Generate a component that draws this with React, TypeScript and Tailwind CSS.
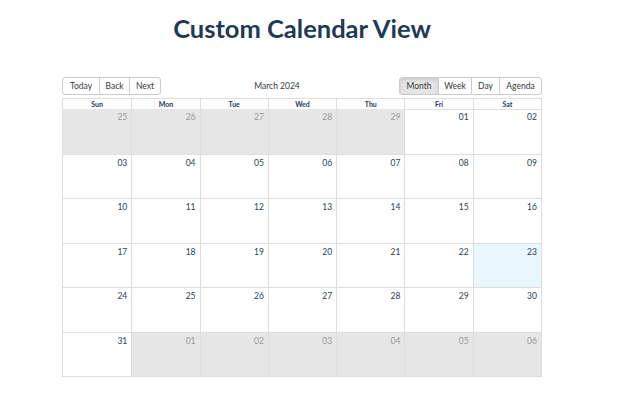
const days = ["Sun", "Mon", "Tue", "Wed", "Thu", "Fri", "Sat"];

type Cell = { label: string; off: boolean; today?: boolean };

// March 2024 month grid, starting on Sun Feb 25
function buildWeeks(): Cell[][] {
  const cells: Cell[] = [];
  for (let d = 25; d <= 29; d++) cells.push({ label: String(d), off: true });
  for (let d = 1; d <= 31; d++)
    cells.push({ label: String(d).padStart(2, "0"), off: false, today: d === 23 });
  for (let d = 1; cells.length < 42; d++)
    cells.push({ label: String(d).padStart(2, "0"), off: true });
  const weeks: Cell[][] = [];
  for (let i = 0; i < 42; i += 7) weeks.push(cells.slice(i, i + 7));
  return weeks;
}

const btn = "h-full px-[7px] border-[#ccc] text-[#373a3c] flex items-center justify-center";

export default function App() {
  const weeks = buildWeeks();
  return (
    <div
      className="w-[604px] bg-white flex flex-col items-center"
      style={{ fontFamily: 'Lato, "Open Sans", sans-serif' }}
    >
      <h1 className="mt-[10px] text-[25.5px] leading-[36px] font-bold text-[#1f3a55]">
        Custom Calendar View
      </h1>

      <div className="mt-[31px] w-[480px]">
        {/* toolbar */}
        <div className="flex items-center h-[18px] text-[8.5px]">
          <div className="flex h-full border border-[#ccc] rounded-[3px]">
            <span className={btn + " w-[36px]"}>Today</span>
            <span className={btn + " w-[30px] border-l"}>Back</span>
            <span className={btn + " w-[31px] border-l"}>Next</span>
          </div>
          <div className="flex-1 text-center text-[#373a3c] pr-[6px]">March 2024</div>
          <div className="flex h-full border border-[#ccc] rounded-[3px] overflow-hidden">
            <span className={btn + " w-[38px] bg-[#e6e6e6] shadow-[inset_0_2px_4px_rgba(0,0,0,0.12)]"}>
              Month
            </span>
            <span className={btn + " w-[33px] border-l"}>Week</span>
            <span className={btn + " w-[28px] border-l"}>Day</span>
            <span className={btn + " w-[42px] border-l"}>Agenda</span>
          </div>
        </div>

        {/* month grid */}
        <div className="mt-[3px] border border-[#ddd]">
          <div className="grid grid-cols-7 h-[10px]">
            {days.map((d, i) => (
              <div
                key={d}
                className={
                  "text-center text-[7px] leading-[10px] font-bold text-[#1f3a55] border-b border-[#ddd]" +
                  (i > 0 ? " border-l" : "")
                }
              >
                {d}
              </div>
            ))}
          </div>
          {weeks.map((week, wi) => (
            <div
              key={wi}
              className={"grid grid-cols-7 h-[44.5px]" + (wi > 0 ? " border-t border-[#ddd]" : "")}
            >
              {week.map((c, ci) => (
                <div
                  key={ci}
                  className={
                    "text-right pr-[4px] pt-[2px] text-[8.5px] leading-[12px]" +
                    (ci > 0 ? " border-l border-[#ddd]" : "") +
                    (c.off
                      ? " bg-[#e6e6e6] text-[#999]"
                      : c.today
                      ? " bg-[#eaf6ff] text-[#2c3e50]"
                      : " text-[#2c3e50]")
                  }
                >
                  {c.label}
                </div>
              ))}
            </div>
          ))}
        </div>
      </div>
    </div>
  );
}
